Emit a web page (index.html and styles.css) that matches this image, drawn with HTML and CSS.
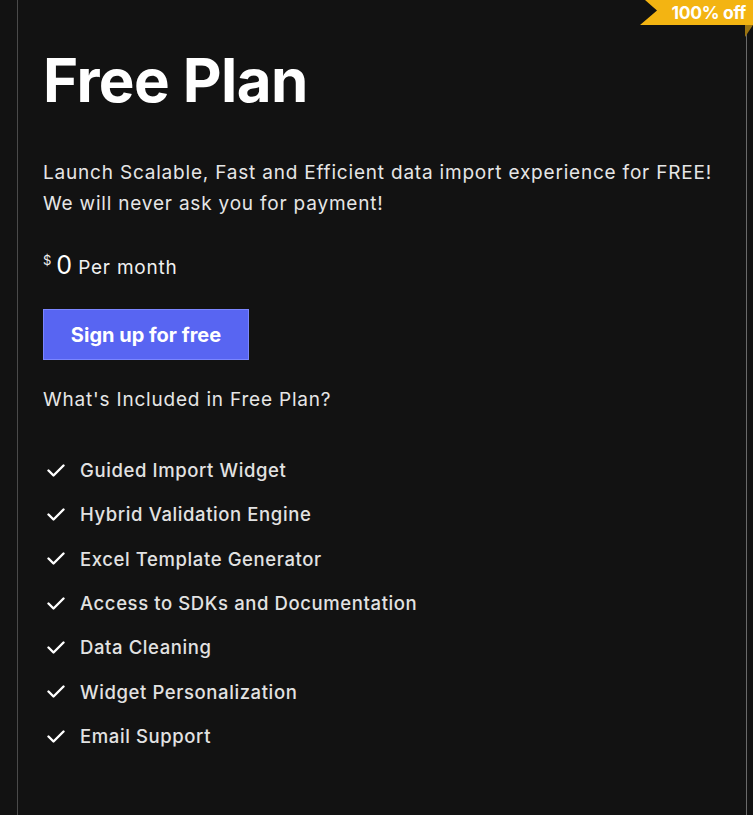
FILE: index.html
```html
<!DOCTYPE html>
<html lang="en">
<head>
<meta charset="utf-8">
<title>Free Plan</title>
<link rel="stylesheet" href="styles.css">
</head>
<body>
<div class="card">
  <div class="ribbon"><span>100% off</span></div>
  <div class="ribbon-fold"></div>
  <h1 class="title">Free Plan</h1>
  <p class="desc">Launch Scalable, Fast and Efficient data import experience for FREE!<br>We will never ask you for payment!</p>
  <div class="price"><sup class="cur">$</sup><span class="amount">0</span><span class="period">Per month</span></div>
  <a class="btn" href="#">Sign up for free</a>
  <p class="included">What's Included in Free Plan?</p>
  <ul class="features">
    <li><svg class="check" viewBox="0 0 18 13" width="18" height="13"><polyline points="1.5,6.5 6.5,11.5 16.5,1.5"/></svg><span>Guided Import Widget</span></li>
    <li><svg class="check" viewBox="0 0 18 13" width="18" height="13"><polyline points="1.5,6.5 6.5,11.5 16.5,1.5"/></svg><span>Hybrid Validation Engine</span></li>
    <li><svg class="check" viewBox="0 0 18 13" width="18" height="13"><polyline points="1.5,6.5 6.5,11.5 16.5,1.5"/></svg><span>Excel Template Generator</span></li>
    <li><svg class="check" viewBox="0 0 18 13" width="18" height="13"><polyline points="1.5,6.5 6.5,11.5 16.5,1.5"/></svg><span>Access to SDKs and Documentation</span></li>
    <li><svg class="check" viewBox="0 0 18 13" width="18" height="13"><polyline points="1.5,6.5 6.5,11.5 16.5,1.5"/></svg><span>Data Cleaning</span></li>
    <li><svg class="check" viewBox="0 0 18 13" width="18" height="13"><polyline points="1.5,6.5 6.5,11.5 16.5,1.5"/></svg><span>Widget Personalization</span></li>
    <li><svg class="check" viewBox="0 0 18 13" width="18" height="13"><polyline points="1.5,6.5 6.5,11.5 16.5,1.5"/></svg><span>Email Support</span></li>
  </ul>
</div>
</body>
</html>
```

FILE: styles.css
```css
* { box-sizing: border-box; }
html, body {
  margin: 0;
  padding: 0;
  background: #121212;
  overflow: hidden;
}
body {
  font-family: "Inter", "Noto Sans", sans-serif;
  color: #ececec;
}
.card {
  position: relative;
  margin-left: 17px;
  width: 730px;
  min-height: 815px;
  border-left: 1px solid #4a4a4a;
  border-right: 1px solid #6a6a6a;
  padding: 50px 0 0 25px;
  display: flex;
  flex-direction: column;
  align-items: flex-start;
}
.ribbon {
  position: absolute;
  top: 0;
  right: -7px;
  width: 113px;
  height: 25px;
  background: #f3b412;
  clip-path: polygon(5px 0, 100% 0, 100% 100%, 0 100%, 17px 42%);
  display: flex;
  align-items: center;
  justify-content: flex-end;
  padding-right: 7px;
}
.ribbon span {
  color: #fff;
  font-weight: 700;
  font-size: 17.5px;
  line-height: 1;
  letter-spacing: -0.3px;
  padding-top: 1px;
}
.ribbon-fold {
  position: absolute;
  top: 25px;
  right: -7px;
  width: 8px;
  height: 12px;
  background: #9c7410;
  clip-path: polygon(0 0, 100% 0, 0 100%);
}
.title {
  margin: 0;
  font-size: 60px;
  line-height: 60px;
  font-weight: 700;
  color: #fff;
  letter-spacing: -0.6px;
}
.desc {
  margin: 47px 0 0;
  font-size: 19px;
  line-height: 31px;
  color: #e6e6e6;
  letter-spacing: 0.8px;
}
.price {
  margin-top: 26px;
  line-height: 30px;
  height: 30px;
  color: #f0f0f0;
}
.cur {
  font-size: 13px;
  vertical-align: 9px;
  margin-right: 5px;
}
.amount {
  font-size: 25px;
  margin-right: 6px;
  color: #fff;
}
.period {
  font-size: 19px;
  letter-spacing: 0.8px;
}
.btn {
  margin-top: 34px;
  width: 206px;
  height: 51px;
  background: #5865f2;
  border: 1px solid #7b86ff;
  color: #fff;
  font-size: 20px;
  font-weight: 700;
  text-decoration: none;
  display: flex;
  align-items: center;
  justify-content: center;
}
.included {
  margin: 25px 0 0;
  font-size: 19px;
  line-height: 30px;
  color: #e6e6e6;
  letter-spacing: 0.8px;
}
.features {
  list-style: none;
  margin: 33px 0 0;
  padding: 0;
}
.features li {
  display: flex;
  align-items: center;
  height: 44.33px;
  font-size: 18.5px;
  font-weight: 500;
  letter-spacing: 0.6px;
  color: #e2e2e2;
}
.check {
  fill: none;
  stroke: #fff;
  stroke-width: 2.4;
  stroke-linecap: round;
  stroke-linejoin: round;
  margin: 0 15px 0 4px;
  flex: none;
}
```
